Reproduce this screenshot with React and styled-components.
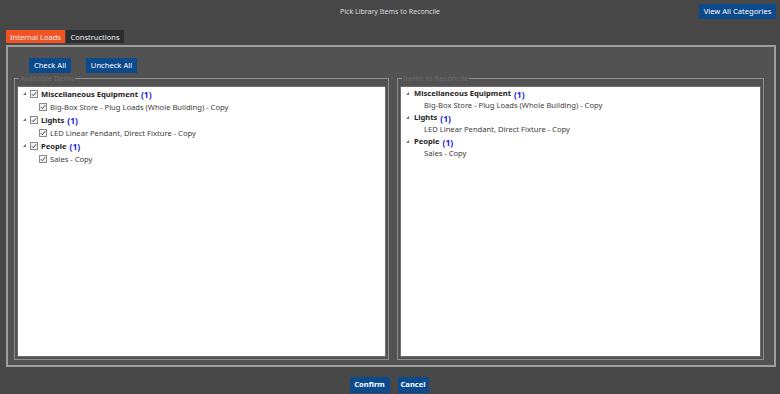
import React from "react";
import styled, { createGlobalStyle } from "styled-components";

const Global = createGlobalStyle`
  html, body { margin: 0; padding: 0; background: #474747; }
  body { font-family: "Noto Sans", "Open Sans", sans-serif; }
  * { box-sizing: border-box; }
`;

const Page = styled.div`
  width: 780px;
  height: 394px;
  display: flex;
  flex-direction: column;
  background: #474747;
  overflow: hidden;
`;

const Header = styled.div`
  height: 30px;
  display: grid;
  grid-template-columns: 1fr auto 1fr;
  align-items: start;
`;

const Title = styled.div`
  grid-column: 2;
  margin-top: 7px;
  font-size: 7px;
  line-height: 10px;
  color: #dcdcdc;
`;

const Btn = styled.button`
  font-family: inherit;
  border: none;
  background: #0b4a8c;
  color: #ffffff;
  font-size: ${(p) => p.$size || 7.6}px;
  font-weight: ${(p) => (p.$bold ? 700 : 400)};
  height: ${(p) => p.$h || 15}px;
  width: ${(p) => p.$w}px;
  padding: 0;
  cursor: pointer;
  line-height: 1;
  display: block;
`;

const HeaderRight = styled.div`
  grid-column: 3;
  justify-self: end;
  display: flex;
  margin: 4px 4px 0 0;
`;

const Tabs = styled.div`
  display: flex;
  padding-left: 6px;
  height: 15px;
  align-items: flex-start;
`;

const Tab = styled.div`
  height: 13px;
  width: ${(p) => p.$w}px;
  background: ${(p) => (p.$active ? "#f15423" : "#2b2d31")};
  color: #f2f2f2;
  font-size: 7.5px;
  display: flex;
  align-items: center;
  justify-content: center;
  margin-right: 1px;
`;

const Panel = styled.div`
  margin: 0 4px 0 6px;
  height: 322px;
  border: 2px solid #9e9e9e;
  background: #525252;
  display: flex;
  flex-direction: column;
  padding: 11px 6px 5px 6px;
`;

const Toolbar = styled.div`
  display: flex;
  gap: 15px;
  padding-left: 15px;
  height: 20px;
  flex: none;
`;

const Groups = styled.div`
  display: grid;
  grid-template-columns: 375px 367px;
  column-gap: 8px;
  flex: 1;
`;

const Group = styled.div`
  position: relative;
  border: 1px solid #8e8e8e;
  padding: 7px 2px 2px 2px;
  display: flex;
`;

const Legend = styled.span`
  position: absolute;
  top: -6px;
  left: 4px;
  padding: 0 1px;
  background: #525252;
  color: #6c6c6c;
  font-size: 7.6px;
  line-height: 10px;
`;

const List = styled.div`
  flex: 1;
  background: #ffffff;
  border: 1px solid #6e6e6e;
  padding: 0;
`;

const Row = styled.div`
  display: flex;
  align-items: center;
  height: ${(p) => p.$h}px;
  padding-left: ${(p) => p.$indent}px;
  font-size: 7.6px;
  color: ${(p) => (p.$parent ? "#1e1e1e" : "#3c3c3c")};
  font-weight: ${(p) => (p.$parent ? 700 : 400)};
  white-space: nowrap;
`;

const Count = styled.span`
  color: #1a1ae6;
  font-weight: 700;
  font-size: 8.5px;
  margin-left: 3px;
  position: relative;
  top: 1px;
`;

const Expander = styled.svg`
  width: 5px;
  height: 5px;
  margin-right: ${(p) => p.$gap}px;
  flex: none;
`;

const Box = styled.svg`
  width: 8px;
  height: 8px;
  margin-right: 3px;
  flex: none;
`;

const Footer = styled.div`
  flex: 1;
  display: flex;
  justify-content: center;
  align-items: flex-start;
  padding-top: 10px;
  gap: 8px;
  padding-right: 2px;
`;

const Arrow = ({ gap }) => (
  <Expander $gap={gap} viewBox="0 0 5 5">
    <path d="M4 1 L4 4 L1 4 Z" fill="#6a6a6a" />
  </Expander>
);

const Check = () => (
  <Box viewBox="0 0 8 8">
    <rect x="0.5" y="0.5" width="7" height="7" fill="#f4f4f4" stroke="#8a8a8a" />
    <path d="M1.8 4.2 L3.3 5.7 L6.2 2.2" fill="none" stroke="#444" strokeWidth="1" />
  </Box>
);

const data = [
  { name: "Miscellaneous Equipment", items: ["Big-Box Store - Plug Loads (Whole Building) - Copy"] },
  { name: "Lights", items: ["LED Linear Pendant, Direct Fixture - Copy"] },
  { name: "People", items: ["Sales - Copy"] },
];

const Tree = ({ checks }) => (
  <List>
    {data.map((g) => (
      <React.Fragment key={g.name}>
        <Row $parent $h={checks ? 13 : 12} $indent={4}>
          <Arrow gap={checks ? 3 : 4} />
          {checks && <Check />}
          {g.name}
          <Count>(1)</Count>
        </Row>
        {g.items.map((it) => (
          <Row key={it} $h={checks ? 13 : 12} $indent={checks ? 21 : 23}>
            {checks && <Check />}
            {it}
          </Row>
        ))}
      </React.Fragment>
    ))}
  </List>
);

export default function App() {
  return (
    <>
      <Global />
      <Page>
        <Header>
          <Title>Pick Library Items to Reconcile</Title>
          <HeaderRight>
            <Btn $w={77}>View All Categories</Btn>
          </HeaderRight>
        </Header>
        <Tabs>
          <Tab $active $w={59}>Internal Loads</Tab>
          <Tab $w={58}>Constructions</Tab>
        </Tabs>
        <Panel>
          <Toolbar>
            <Btn $w={42}>Check All</Btn>
            <Btn $w={51}>Uncheck All</Btn>
          </Toolbar>
          <Groups>
            <Group>
              <Legend>Available Items</Legend>
              <Tree checks />
            </Group>
            <Group>
              <Legend>Items to Reconcile</Legend>
              <Tree />
            </Group>
          </Groups>
        </Panel>
        <Footer>
          <Btn $bold $w={40} $h={16}>Confirm</Btn>
          <Btn $bold $w={31} $h={16}>Cancel</Btn>
        </Footer>
      </Page>
    </>
  );
}
